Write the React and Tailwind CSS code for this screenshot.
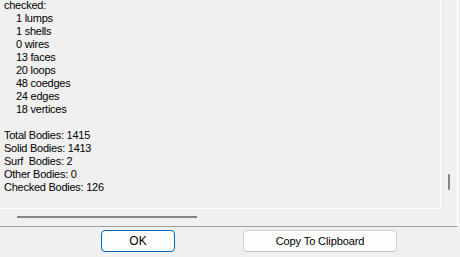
export default function App() {
  const parts = [
    '1 lumps',
    '1 shells',
    '0 wires',
    '13 faces',
    '20 loops',
    '48 coedges',
    '24 edges',
    '18 vertices',
  ]
  const totals = [
    'Total Bodies: 1415',
    'Solid Bodies: 1413',
    'Surf  Bodies: 2',
    'Other Bodies: 0',
    'Checked Bodies: 126',
  ]

  return (
    <div className="w-[460px] h-[257px] bg-[#f0f0f0] overflow-hidden text-black font-['Liberation_Sans',Arial,sans-serif] text-[11px]">
      <div className="w-[458px] h-[227px] flex flex-col border-r border-white border-b border-b-[#a0a0a0]">
        <div className="flex h-[209px]">
          <div className="w-[441px] border-r border-b border-white pl-[4px] -mt-[1px] leading-[13px] tracking-[-0.25px] whitespace-pre">
            <div>checked:</div>
            {parts.map((p) => (
              <div key={p} className="pl-[12px]">{p}</div>
            ))}
            <div>&nbsp;</div>
            {totals.map((t) => (
              <div key={t}>{t}</div>
            ))}
          </div>
          <div className="flex-1 pt-[174px] pl-[7px]">
            <div className="w-[2px] h-[16px] bg-[#858585] rounded-full" />
          </div>
        </div>
        <div className="flex-1 pt-[7px] pl-[17px]">
          <div className="w-[180px] h-[2px] bg-[#858585]" />
        </div>
      </div>
      <div className="flex pt-[3px]">
        <button className="ml-[101px] w-[74px] h-[22px] rounded-[4px] border border-[#0067c0] bg-[#fdfdfd] text-[12px] leading-none">
          OK
        </button>
        <button className="ml-[68px] w-[154px] h-[22px] rounded-[4px] border border-[#d0d0d0] border-b-[#c4c4c4] bg-[#fdfdfd] text-[11px] leading-none tracking-[-0.1px]">
          Copy To Clipboard
        </button>
      </div>
    </div>
  )
}
